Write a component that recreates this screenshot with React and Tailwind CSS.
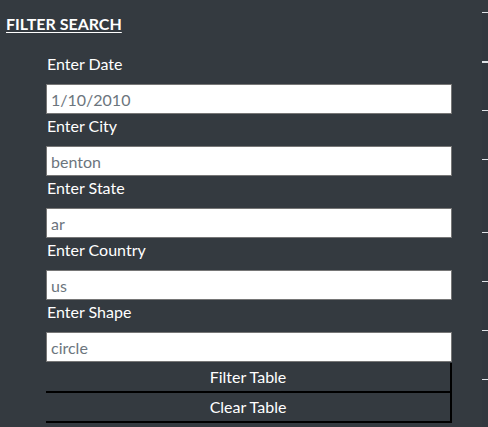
import React from "react";

const fields = [
  { label: "Enter Date", value: "1/10/2010" },
  { label: "Enter City", value: "benton" },
  { label: "Enter State", value: "ar" },
  { label: "Enter Country", value: "us" },
  { label: "Enter Shape", value: "circle" },
];

// row heights of the table peeking in on the right
const rows = [49, 49, 49, 73, 49, 49, 49, 49];

const App = () => {
  return (
    <div
      className="flex min-h-screen bg-[#343a40] text-white"
      style={{ fontFamily: "Lato, 'Liberation Sans', sans-serif" }}
    >
      <div className="w-[482px] shrink-0 pl-[6px] pt-3">
        <h3 className="h-6 text-base leading-6 font-bold underline underline-offset-2">
          FILTER SEARCH
        </h3>
        <form className="ml-[40px] mt-4 w-[406px]">
          {fields.map((f) => (
            <div key={f.label}>
              <label className="mb-2 block h-6 pl-px text-base leading-6">{f.label}</label>
              <input
                type="text"
                defaultValue={f.value}
                className="block h-[30px] w-[406px] border border-[#767676] bg-white px-1 text-base text-[#6c757d] outline-none"
              />
            </div>
          ))}
          <button
            type="button"
            className="mt-px block h-[30px] w-[406px] border-r-2 border-b-2 border-black bg-[#343a40] text-base leading-6 text-white"
          >
            Filter Table
          </button>
          <button
            type="button"
            className="block h-[30px] w-[406px] border-r-2 border-b-2 border-black bg-[#343a40] text-base leading-6 text-white"
          >
            Clear Table
          </button>
        </form>
      </div>
      <div className="flex-1 bg-[#343a40] pt-3">
        <div className="flex flex-col bg-[#32383f]">
          {rows.map((h, i) => (
            <div
              key={i}
              className={i === 1 ? "border-t-2 border-[#dee2e6]" : "border-t border-[#dee2e6]"}
              style={{ height: h }}
            />
          ))}
        </div>
      </div>
    </div>
  );
};

export default App;
